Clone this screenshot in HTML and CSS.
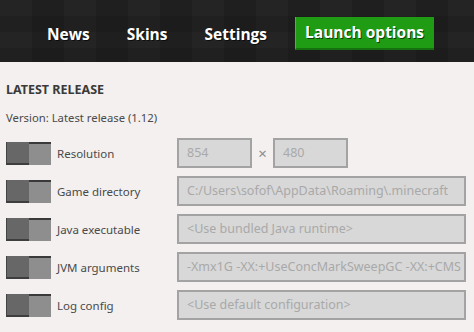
FILE: index.html
```html
<!DOCTYPE html>
<html lang="en">
<head>
  <meta charset="UTF-8">
  <title>Launch options</title>
  <link rel="stylesheet" href="styles.css">
</head>
<body>

  <!-- Top navigation -->
  <header class="topbar">
    <nav class="nav">
      <a href="#" class="nav-link">News</a>
      <a href="#" class="nav-link">Skins</a>
      <a href="#" class="nav-link">Settings</a>
      <a href="#" class="nav-link active">Launch options</a>
    </nav>
  </header>

  <!-- Profile editor -->
  <main class="content">
    <h2 class="section-title">LATEST RELEASE</h2>
    <p class="version">Version: Latest release (1.12)</p>

    <div class="options">
      <div class="option-row">
        <span class="toggle"><span class="toggle-off"></span><span class="toggle-on"></span></span>
        <span class="option-label">Resolution</span>
        <div class="field-pair">
          <span class="field small">854</span>
          <span class="times">×</span>
          <span class="field small">480</span>
        </div>
      </div>

      <div class="option-row">
        <span class="toggle"><span class="toggle-off"></span><span class="toggle-on"></span></span>
        <span class="option-label">Game directory</span>
        <span class="field">C:/Users\sofof\AppData\Roaming\.minecraft</span>
      </div>

      <div class="option-row">
        <span class="toggle"><span class="toggle-off"></span><span class="toggle-on"></span></span>
        <span class="option-label">Java executable</span>
        <span class="field">&lt;Use bundled Java runtime&gt;</span>
      </div>

      <div class="option-row">
        <span class="toggle"><span class="toggle-off"></span><span class="toggle-on"></span></span>
        <span class="option-label">JVM arguments</span>
        <span class="field">-Xmx1G -XX:+UseConcMarkSweepGC -XX:+CMS</span>
      </div>

      <div class="option-row">
        <span class="toggle"><span class="toggle-off"></span><span class="toggle-on"></span></span>
        <span class="option-label">Log config</span>
        <span class="field">&lt;Use default configuration&gt;</span>
      </div>
    </div>
  </main>

</body>
</html>
```

FILE: styles.css
```css
body {
  margin: 0;
  padding: 0;
  font-family: 'Noto Sans', sans-serif;
  background-color: #f3f0ef;
  color: #3a3a3a;
  overflow: hidden;
}

/* Top navigation */
.topbar {
  height: 62px;
  background-color: #1e1e1e;
  background-image:
    linear-gradient(90deg, rgba(255,255,255,0.012) 50%, rgba(0,0,0,0.05) 50%),
    linear-gradient(rgba(255,255,255,0.01) 50%, rgba(0,0,0,0.04) 50%);
  background-size: 64px 62px, 48px 32px;
  display: flex;
  align-items: flex-start;
}

.nav {
  display: flex;
  align-items: center;
  gap: 19px;
  padding-left: 38px;
  margin-top: 17px;
  height: 33px;
}

.nav-link {
  color: #fff;
  text-decoration: none;
  font-family: 'Open Sans', sans-serif;
  font-weight: 700;
  font-size: 15.5px;
  padding: 0 9px;
  text-shadow: 1px 1px 0 rgba(0,0,0,0.6);
}

.nav-link.active {
  box-sizing: border-box;
  height: 33px;
  line-height: 31px;
  padding: 0 10px 0 9px;
  background-color: #1f9c14;
  border-left: 1px solid #3fbf2f;
  border-bottom: 2px solid #177010;
}

/* Content */
.content {
  padding: 0 6px;
}

.section-title {
  margin: 19px 0 0;
  font-size: 12.5px;
  font-weight: 700;
  color: #3a3a3a;
}

.version {
  margin: 12px 0 0;
  font-size: 11.3px;
  color: #4a4a4a;
}

.options {
  display: flex;
  flex-direction: column;
  gap: 8px;
  margin-top: 13px;
}

.option-row {
  display: flex;
  align-items: center;
  height: 30px;
}

/* Toggle switch */
.toggle {
  display: flex;
  width: 45px;
  height: 23px;
  margin-right: 6px;
}

.toggle-off {
  flex: 1;
  background-color: #676767;
  border-left: 1px solid #444;
  border-bottom: 2px solid #3e3e3e;
}

.toggle-on {
  flex: 1;
  background-color: #8e8e8e;
  border-top: 2px solid #3a3a3a;
}

.option-label {
  width: 120px;
  font-size: 11.5px;
  color: #4a4a4a;
}

/* Text fields */
.field {
  box-sizing: border-box;
  width: 289px;
  height: 30px;
  line-height: 26px;
  padding: 0 8px;
  background-color: #d8d8d8;
  border: 2px solid #a3a3a3;
  color: #a9a9a9;
  font-size: 12.5px;
  white-space: nowrap;
  overflow: hidden;
}

.field-pair {
  display: flex;
  align-items: center;
}

.field.small {
  width: 75px;
}

.times {
  width: 21px;
  text-align: center;
  color: #8a8a8a;
  font-size: 15px;
}
```
